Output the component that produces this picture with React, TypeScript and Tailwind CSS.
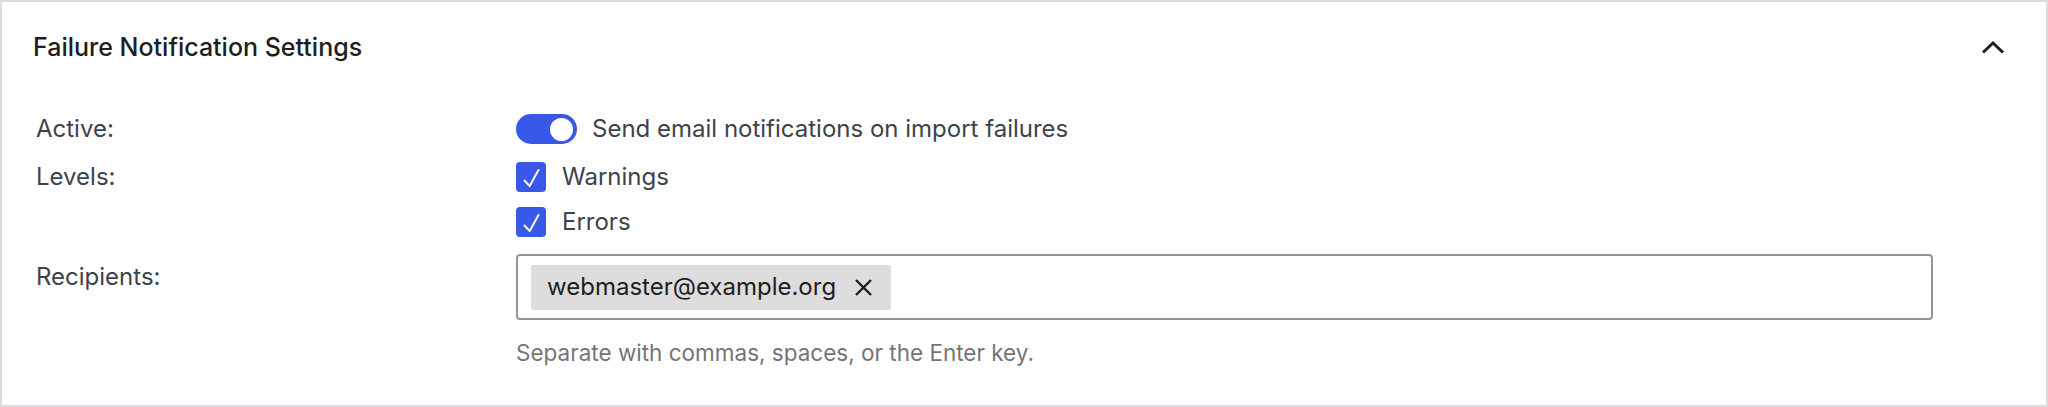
import { ReactNode } from 'react'

const font = { fontFamily: 'Inter, "Noto Sans", sans-serif' }

function Toggle() {
  return (
    <span className="flex h-[30px] w-[61px] items-center justify-end rounded-full bg-[#3858e9] pr-[4px]">
      <span className="h-[23px] w-[23px] rounded-full bg-white" />
    </span>
  )
}

function Checkbox() {
  return (
    <span className="flex h-[30px] w-[30px] items-center justify-center rounded-[4px] bg-[#3858e9]">
      <svg width="30" height="30" viewBox="0 0 30 30" fill="none">
        <path d="M8.5 18.5l5.2 5.6L22.5 8" stroke="#fff" strokeWidth="2" strokeLinecap="round" strokeLinejoin="round" />
      </svg>
    </span>
  )
}

function Row({ label, labelClass, children }: { label: string; labelClass?: string; children: ReactNode }) {
  return (
    <div className="grid grid-cols-[480px_1fr]">
      <div className={'text-[24px] leading-[30px] text-[#3c434a] ' + (labelClass ?? '')}>{label}</div>
      <div>{children}</div>
    </div>
  )
}

export default function App() {
  return (
    <div className="h-[407px] w-[2048px] border-2 border-[#dcdcde] bg-white" style={font}>
      <div className="flex h-[90px] items-center justify-between pl-[31px] pr-[41px]">
        <h2 className="text-[25px] font-medium leading-[30px] text-[#1e1e1e]">Failure Notification Settings</h2>
        <svg width="24" height="24" viewBox="0 0 24 24" fill="none">
          <path d="M2 17.5L12 8l10 9.5" stroke="#1e1e1e" strokeWidth="3" />
        </svg>
      </div>

      <div className="flex flex-col pl-[34px] pr-[113px] pt-[22px]">
        <Row label="Active:">
          <div className="flex items-center gap-[15px]">
            <Toggle />
            <span className="text-[24px] leading-[30px] text-[#3c434a]">Send email notifications on import failures</span>
          </div>
        </Row>

        <div className="mt-[18px]">
          <Row label="Levels:">
            <div className="flex flex-col gap-[15px]">
              <label className="flex items-center gap-[16px]">
                <Checkbox />
                <span className="text-[24px] leading-[30px] text-[#3c434a]">Warnings</span>
              </label>
              <label className="flex items-center gap-[16px]">
                <Checkbox />
                <span className="text-[24px] leading-[30px] text-[#3c434a]">Errors</span>
              </label>
            </div>
          </Row>
        </div>

        <div className="mt-[17px]">
          <Row label="Recipients:" labelClass="pt-[8px]">
            <div className="flex h-[66px] items-center rounded-[4px] border-2 border-[#949494] px-[13px]">
              <span className="flex h-[45px] items-center gap-[18px] rounded-[2px] bg-[#dddddd] pl-[16px] pr-[18px]">
                <span className="text-[24px] leading-[30px] text-[#1e1e1e]">webmaster@example.org</span>
                <svg width="19" height="19" viewBox="0 0 19 19" fill="none">
                  <path d="M2 2l15 15M17 2L2 17" stroke="#1e1e1e" strokeWidth="2.4" />
                </svg>
              </span>
            </div>
            <p className="mt-[18px] text-[22.5px] leading-[30px] text-[#757575]">Separate with commas, spaces, or the Enter key.</p>
          </Row>
        </div>
      </div>
    </div>
  )
}
